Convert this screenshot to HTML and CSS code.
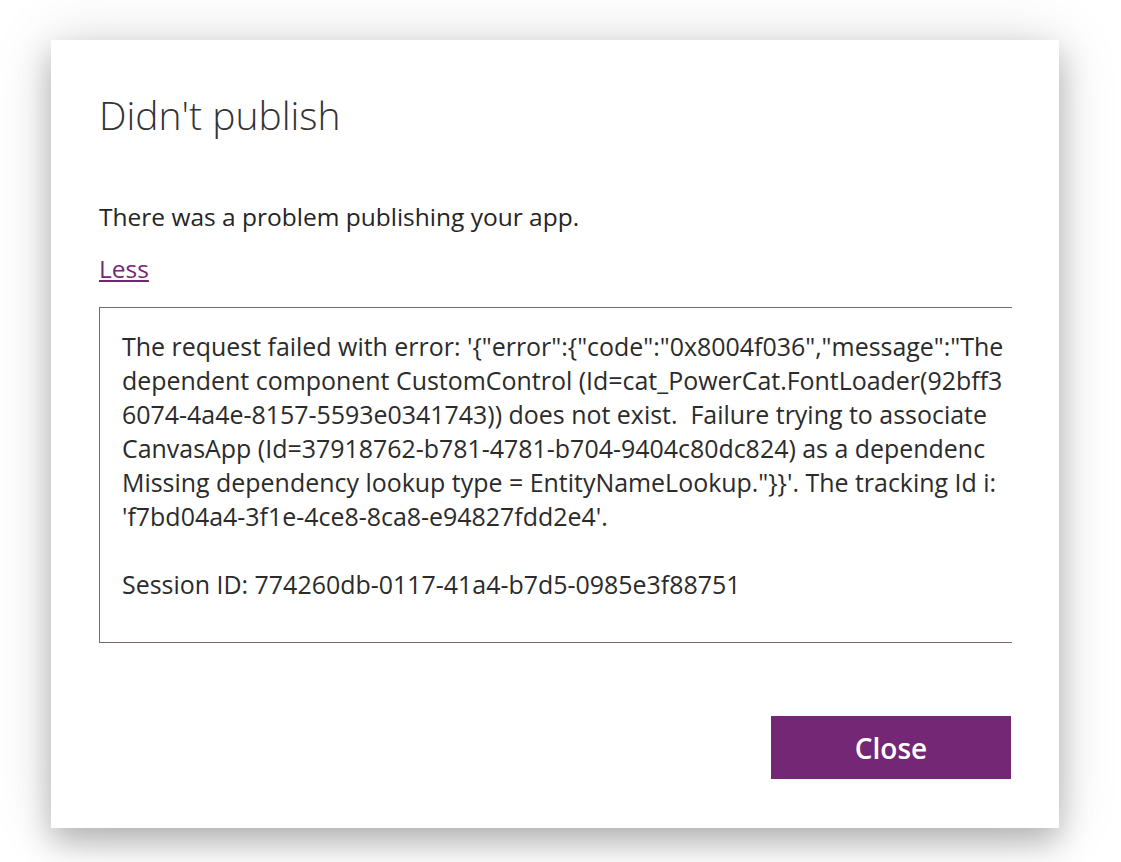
FILE: index.html
```html
<!DOCTYPE html>
<html lang="en">
<head>
<meta charset="utf-8">
<title>Didn't publish</title>
<link rel="stylesheet" href="styles.css">
</head>
<body>
<div class="dialog">
  <h1 class="title">Didn't publish</h1>
  <p class="message">There was a problem publishing your app.</p>
  <a class="less" href="#">Less</a>
  <div class="details-clip">
    <div class="details">
      <div class="line">The request failed with error: '{"error":{"code":"0x8004f036","message":"The</div>
      <div class="line">dependent component CustomControl (Id=cat_PowerCat.FontLoader(92bff3</div>
      <div class="line">6074-4a4e-8157-5593e0341743)) does not exist.&nbsp; Failure trying to associate</div>
      <div class="line">CanvasApp (Id=37918762-b781-4781-b704-9404c80dc824) as a dependenc</div>
      <div class="line">Missing dependency lookup type = EntityNameLookup."}}'. The tracking Id i:</div>
      <div class="line">'f7bd04a4-3f1e-4ce8-8ca8-e94827fdd2e4'.</div>
      <div class="line">&nbsp;</div>
      <div class="line">Session ID: 774260db-0117-41a4-b7d5-0985e3f88751</div>
    </div>
  </div>
  <div class="footer">
    <button class="close" type="button">Close</button>
  </div>
</div>
</body>
</html>
```
FILE: styles.css
```css
html, body {
  margin: 0;
  padding: 0;
  background: #ffffff;
}
body {
  font-family: "Open Sans", "Noto Sans", sans-serif;
  color: #252525;
  padding: 40px 0 34px 51px;
  min-height: 862px;
  box-sizing: border-box;
}
.dialog {
  width: 1008px;
  height: 788px;
  box-sizing: border-box;
  background: #ffffff;
  box-shadow: 0 14px 30px rgba(0, 0, 0, 0.26), 0 0 60px rgba(0, 0, 0, 0.12);
  padding: 51px 47px 0 48px;
}
.title {
  margin: 0;
  font-size: 39px;
  line-height: 48px;
  font-weight: 300;
  color: #333333;
}
.message {
  margin: 62px 0 0;
  font-size: 24.5px;
  line-height: 32px;
  color: #252525;
}
.less {
  display: inline-block;
  margin-top: 20px;
  font-size: 24.5px;
  line-height: 32px;
  color: #742774;
  text-decoration: underline;
}
.details-clip {
  margin-top: 22px;
  overflow: hidden;
}
.details {
  width: 1100px;
  border: 1px solid #806579;
  padding: 21px 0 41px 22px;
  font-size: 24.95px;
  line-height: 34px;
  color: #2b2b2b;
}
.line {
  white-space: pre;
}
.footer {
  display: flex;
  justify-content: flex-end;
  margin-top: 73px;
}
.close {
  width: 240px;
  height: 63px;
  margin-right: 1px;
  border: none;
  background: #742774;
  color: #ffffff;
  font-family: "Open Sans", "Noto Sans", sans-serif;
  font-size: 28px;
  font-weight: 600;
  padding: 0;
}
```
